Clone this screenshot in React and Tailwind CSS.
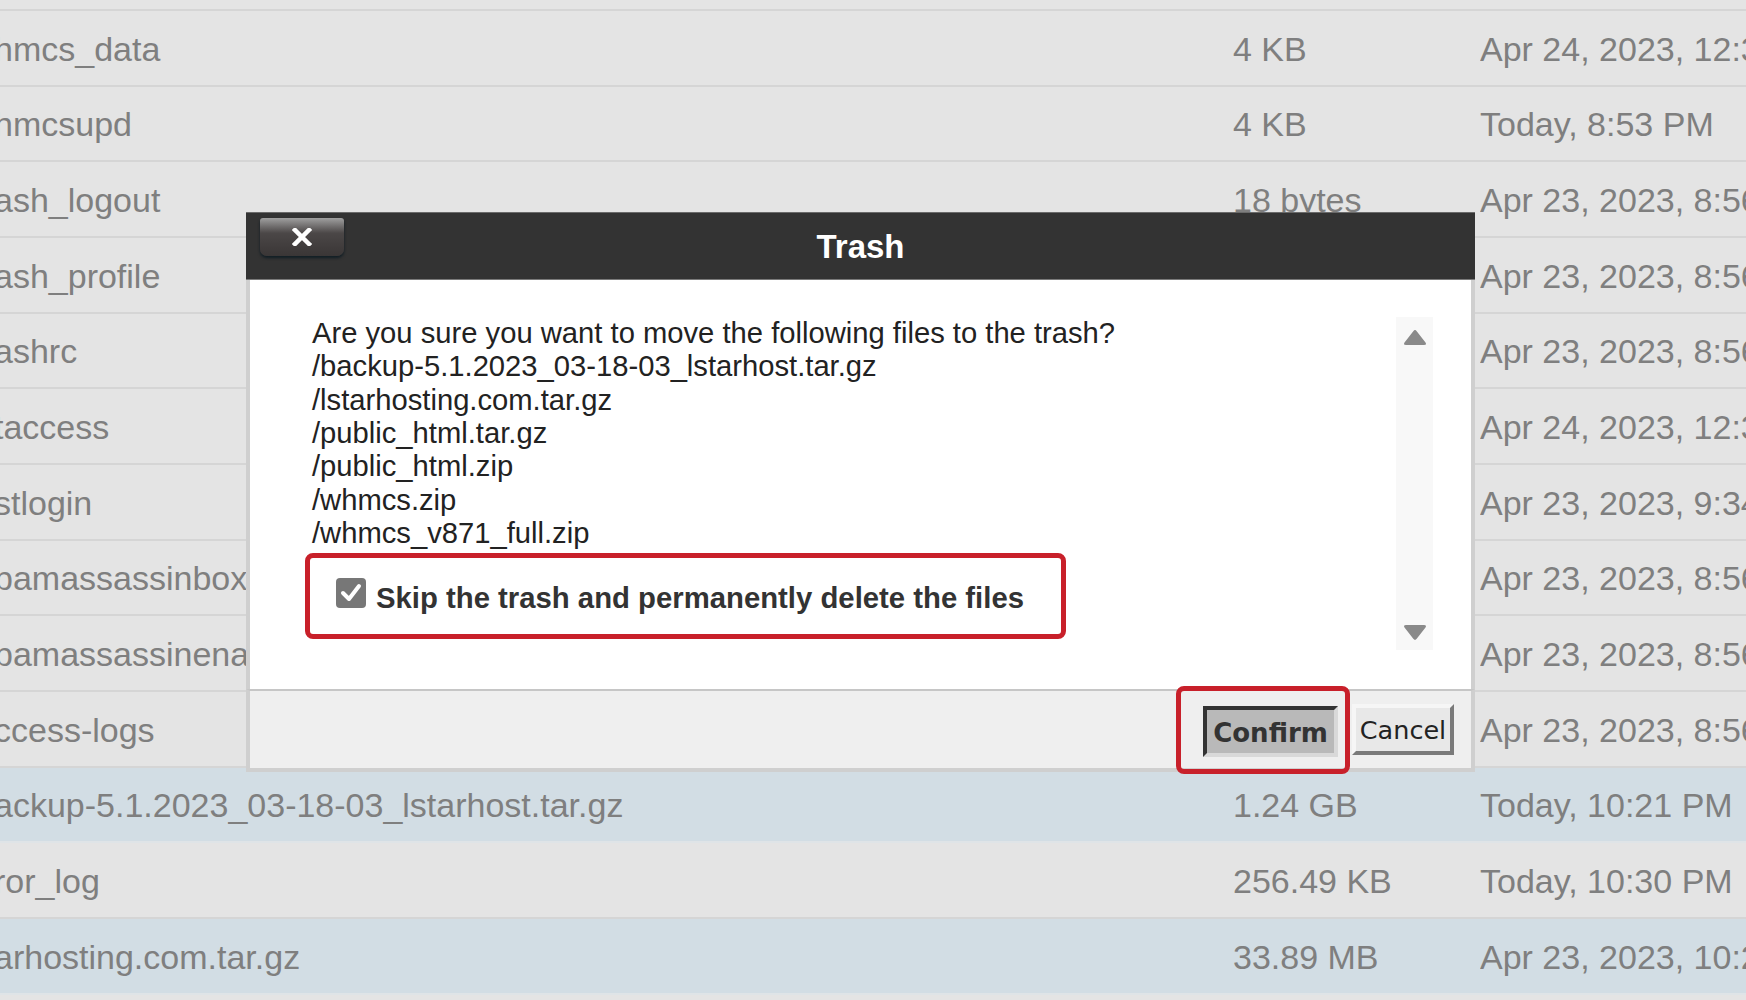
import React from "react";

const rows = [
  { name: "hmcs_data", size: "4 KB", date: "Apr 24, 2023, 12:31 AM", sel: false },
  { name: "hmcsupd", size: "4 KB", date: "Today, 8:53 PM", sel: false },
  { name: "ash_logout", size: "18 bytes", date: "Apr 23, 2023, 8:56 PM", sel: false },
  { name: "ash_profile", size: "141 bytes", date: "Apr 23, 2023, 8:56 PM", sel: false },
  { name: "ashrc", size: "312 bytes", date: "Apr 23, 2023, 8:56 PM", sel: false },
  { name: "taccess", size: "1.07 KB", date: "Apr 24, 2023, 12:31 AM", sel: false },
  { name: "stlogin", size: "97 bytes", date: "Apr 23, 2023, 9:34 PM", sel: false },
  { name: "pamassassinboxonly", size: "0 bytes", date: "Apr 23, 2023, 8:56 PM", sel: false },
  { name: "pamassassinenable", size: "0 bytes", date: "Apr 23, 2023, 8:56 PM", sel: false },
  { name: "ccess-logs", size: "4 KB", date: "Apr 23, 2023, 8:56 PM", sel: false },
  { name: "ackup-5.1.2023_03-18-03_lstarhost.tar.gz", size: "1.24 GB", date: "Today, 10:21 PM", sel: true },
  { name: "ror_log", size: "256.49 KB", date: "Today, 10:30 PM", sel: false },
  { name: "arhosting.com.tar.gz", size: "33.89 MB", date: "Apr 23, 2023, 10:27 PM", sel: true },
  { name: "ublic_ftp", size: "4 KB", date: "Apr 23, 2023, 8:56 PM", sel: false },
];

const files = [
  "/backup-5.1.2023_03-18-03_lstarhost.tar.gz",
  "/lstarhosting.com.tar.gz",
  "/public_html.tar.gz",
  "/public_html.zip",
  "/whmcs.zip",
  "/whmcs_v871_full.zip",
];

function Row({ r }) {
  return (
    <div
      className={`flex items-center h-[75.67px] border-b-2 pt-[3px] ${
        r.sel ? "bg-[#d2dde4] border-[#dfe4e7]" : "bg-[#e4e4e4] border-[#d5d5d5]"
      } text-[34px] text-[#7f7f7f] whitespace-nowrap`}
    >
      <div className="w-[1239px] shrink-0 -ml-[6px] overflow-hidden">{r.name}</div>
      <div className="w-[247px] shrink-0">{r.size}</div>
      <div className="flex-1 overflow-hidden">{r.date}</div>
    </div>
  );
}

export default function App() {
  return (
    <div className="relative w-[1746px] h-[1000px] overflow-hidden bg-[#e4e4e4] font-['Liberation_Sans',Arial,sans-serif]">
      {/* background file table */}
      <div className="flex flex-col">
        <div className="h-[11px] border-b-2 border-[#d5d5d5] bg-[#e4e4e4]" />
        {rows.map((r, i) => (
          <Row key={i} r={r} />
        ))}
      </div>

      {/* Dialog */}
      <div className="absolute left-[246px] top-[212px] w-[1229px] flex flex-col">
        {/* header */}
        <div className="relative h-[68px] bg-[#333333] border-t border-[#6a6a6a] border-b border-b-[#7a7a7a] flex items-center justify-center">
          <div className="absolute left-[14px] top-[5px] w-[84px] h-[38px] rounded-t-[3px] rounded-b-[7px] bg-linear-to-b from-[#a0a0a0] from-0% via-[#4b4747] via-40% to-[#3a3636] shadow-[0_2px_3px_rgba(0,20,30,0.7)] flex items-center justify-center">
            <svg width="20" height="18" viewBox="0 0 20 18">
              <path d="M3 2 L17 16 M17 2 L3 16" stroke="white" strokeWidth="4.5" strokeLinecap="square" />
            </svg>
          </div>
          <span className="text-[33px] font-bold text-white leading-none">Trash</span>
        </div>

        {/* body */}
        <div className="h-[409px] bg-white border-x-4 border-[#cfcfcf] flex">
          <div className="flex-1 pl-[62px] pt-[37px]">
            <div className="text-[29.2px] leading-[33.35px] text-[#222]">
              <div>Are you sure you want to move the following files to the trash?</div>
              {files.map((f) => (
                <div key={f}>{f}</div>
              ))}
            </div>
            <div className="mt-[3px] -ml-[7px] w-[761px] h-[86px] border-[5px] border-[#c8202a] rounded-[8px] flex items-center pl-[26px]">
              <div className="w-[30px] h-[30px] mb-[6px] rounded-[4px] bg-[#777777] flex items-center justify-center shrink-0">
                <svg width="24" height="22" viewBox="0 0 24 22">
                  <path d="M4 11 L10 17 L20 4" stroke="white" strokeWidth="4" fill="none" strokeLinecap="round" strokeLinejoin="round" />
                </svg>
              </div>
              <span className="ml-[10px] mt-[4px] text-[29.3px] font-bold text-[#333] whitespace-nowrap">
                Skip the trash and permanently delete the files
              </span>
            </div>
          </div>
          <div className="w-[37px] mr-[38px] mt-[37px] h-[333px] bg-[#f8f8f8] flex flex-col items-center justify-between pt-[12px] pb-[9px]">
            <svg width="24" height="17" viewBox="0 0 24 17">
              <path d="M10.3 2.2 Q12 0 13.7 2.2 L22.5 13.5 Q24 16 21 16 L3 16 Q0 16 1.5 13.5 Z" fill="#8a8a8a" />
            </svg>
            <svg width="24" height="17" viewBox="0 0 24 17">
              <path d="M10.3 14.8 Q12 17 13.7 14.8 L22.5 3.5 Q24 1 21 1 L3 1 Q0 1 1.5 3.5 Z" fill="#8a8a8a" />
            </svg>
          </div>
        </div>

        {/* footer */}
        <div className="h-[83px] bg-[#efefef] border-x-4 border-b-4 border-t-2 border-[#cfcfcf] border-t-[#c6c6c6] flex items-center justify-end pr-[17px]">
          <div className="h-[88px] shrink-0 border-[5px] border-[#c8202a] rounded-[8px] pl-[22px] pr-[7px] pt-[15px] pb-[12px]">
            <button className="w-[135px] h-[51px] pt-[3px] bg-[#b9b9b9] border-4 border-t-[#333] border-l-[#333] border-b-[#d9d9d9] border-r-[#d9d9d9] font-['DejaVu_Sans',Verdana,sans-serif] font-bold text-[26px] text-[#333] leading-none flex items-center justify-center">
              Confirm
            </button>
          </div>
          <button className="ml-[2px] w-[102px] h-[51px] pt-[3px] bg-[#e8e8e8] border-4 border-t-[#f6f6f6] border-l-[#f6f6f6] border-b-[#7a7a7a] border-r-[#7a7a7a] font-['DejaVu_Sans',Verdana,sans-serif] text-[25.5px] text-[#222] leading-none flex items-center justify-center">
            Cancel
          </button>
        </div>
      </div>
    </div>
  );
}
